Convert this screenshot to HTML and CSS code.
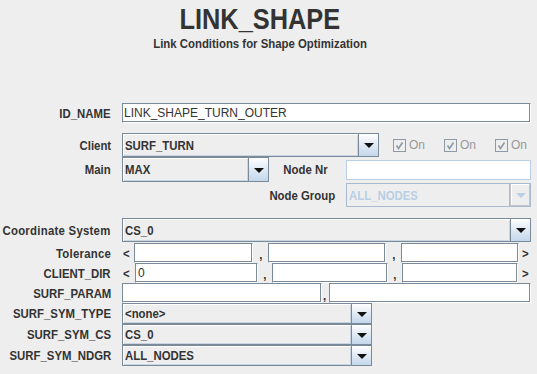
FILE: index.html
```html
<!DOCTYPE html>
<html>
<head>
<meta charset="utf-8">
<link rel="stylesheet" href="styles.css">
</head>
<body>
<div class="panel">
  <div class="header">
    <h1 class="title"><span>LINK_SHAPE</span></h1>
    <div class="subtitle"><span>Link Conditions for Shape Optimization</span></div>
  </div>

  <div class="form">
    <div class="row r-id">
      <div class="lbl"><span>ID_NAME</span></div>
      <div class="tf w-full"><span class="tf-text">LINK_SHAPE_TURN_OUTER</span></div>
    </div>

    <div class="row r-client">
      <div class="lbl"><span>Client</span></div>
      <div class="combo w-client"><div class="disp"><span>SURF_TURN</span></div><div class="btn"></div></div>
      <div class="checks">
        <div class="chk"><svg class="cbox" width="13" height="13" viewBox="0 0 13 13"><rect x="0.5" y="0.5" width="12" height="12" fill="#eeeeee" stroke="#8e9aa6"/><path d="M3.5 6.5 L5.5 9.5 L9.5 3.5" fill="none" stroke="#8e9aa6" stroke-width="1.6"/></svg><span>On</span></div>
        <div class="chk"><svg class="cbox" width="13" height="13" viewBox="0 0 13 13"><rect x="0.5" y="0.5" width="12" height="12" fill="#eeeeee" stroke="#8e9aa6"/><path d="M3.5 6.5 L5.5 9.5 L9.5 3.5" fill="none" stroke="#8e9aa6" stroke-width="1.6"/></svg><span>On</span></div>
        <div class="chk"><svg class="cbox" width="13" height="13" viewBox="0 0 13 13"><rect x="0.5" y="0.5" width="12" height="12" fill="#eeeeee" stroke="#8e9aa6"/><path d="M3.5 6.5 L5.5 9.5 L9.5 3.5" fill="none" stroke="#8e9aa6" stroke-width="1.6"/></svg><span>On</span></div>
      </div>
    </div>

    <div class="row r-main">
      <div class="lbl"><span>Main</span></div>
      <div class="combo w-main"><div class="disp"><span>MAX</span></div><div class="btn"></div></div>
      <div class="lbl2 nodenr"><span>Node Nr</span></div>
      <div class="tf tf-light w-node"></div>
    </div>

    <div class="row r-ng">
      <div class="lbl2 nodegroup"><span>Node Group</span></div>
      <div class="combo dis w-node"><div class="disp"><span>ALL_NODES</span></div><div class="btn"></div></div>
    </div>

    <div class="row r-cs">
      <div class="lbl lc"><span>Coordinate System</span></div>
      <div class="combo w-full"><div class="disp"><span>CS_0</span></div><div class="btn"></div></div>
    </div>

    <div class="row r-vec">
      <div class="lbl lc"><span>Tolerance</span></div>
      <div class="sep lt t1"><span>&lt;</span></div>
      <div class="tf tol-a"></div>
      <div class="sep comma t2"><span>,</span></div>
      <div class="tf tol-b"></div>
      <div class="sep comma t2"><span>,</span></div>
      <div class="tf tol-b"></div>
      <div class="sep gt t1"><span>&gt;</span></div>
    </div>

    <div class="row r-vec">
      <div class="lbl"><span>CLIENT_DIR</span></div>
      <div class="sep lt c1"><span>&lt;</span></div>
      <div class="tf cd-a"><span class="tf-text">0</span></div>
      <div class="sep comma c2"><span>,</span></div>
      <div class="tf cd-b"></div>
      <div class="sep comma c2"><span>,</span></div>
      <div class="tf cd-b"></div>
      <div class="sep gt c1"><span>&gt;</span></div>
    </div>

    <div class="row r-vec">
      <div class="lbl"><span>SURF_PARAM</span></div>
      <div class="tf sp-a"></div>
      <div class="sep comma-l"><span>,</span></div>
      <div class="tf sp-b"></div>
    </div>

    <div class="row r-sym">
      <div class="lbl"><span>SURF_SYM_TYPE</span></div>
      <div class="combo w-sym"><div class="disp"><span>&lt;none&gt;</span></div><div class="btn"></div></div>
    </div>
    <div class="row r-sym">
      <div class="lbl"><span>SURF_SYM_CS</span></div>
      <div class="combo w-sym"><div class="disp"><span>CS_0</span></div><div class="btn"></div></div>
    </div>
    <div class="row r-sym">
      <div class="lbl"><span>SURF_SYM_NDGR</span></div>
      <div class="combo w-sym"><div class="disp"><span>ALL_NODES</span></div><div class="btn"></div></div>
    </div>
  </div>
</div>
</body>
</html>
```

FILE: styles.css
```css
html, body {
  margin: 0;
  padding: 0;
  background: #eeeeee;
}
body {
  font-family: "Liberation Sans", Arial, sans-serif;
  color: #333333;
  width: 537px;
  height: 374px;
  overflow: hidden;
}
.panel {
  width: 537px;
}
.header {
  width: 520px;
  text-align: center;
}
.title {
  margin: 0;
  padding-top: 3px;
  font-size: 29px;
  line-height: 32px;
  font-weight: bold;
  color: #333333;
}
.title span,
.subtitle span {
  display: inline-block;
  transform: scaleX(0.875);
  transform-origin: center;
  white-space: nowrap;
}
.subtitle {
  margin-top: 1px;
  font-size: 13px;
  line-height: 15px;
  font-weight: bold;
}
.form {
  margin-top: 52px;
}
.row {
  display: flex;
  align-items: center;
}
.lbl,
.lbl2 {
  display: flex;
  justify-content: flex-end;
  font-size: 13px;
  font-weight: bold;
  white-space: nowrap;
  flex: none;
}
.lbl {
  width: 111px;
  margin-right: 11px;
}
.lbl.lc span {
  letter-spacing: 0.3px;
}
.lbl span,
.lbl2 span,
.sep span,
.disp span {
  display: inline-block;
  flex: none;
  transform: scaleX(0.875);
  transform-origin: right center;
  white-space: nowrap;
}
.disp span {
  transform-origin: left center;
}
.nodenr { width: 59px; margin-right: 18px; }
.nodegroup { width: 335px; margin-right: 11px; }

.r-id { height: 20px; margin-bottom: 10px; }
.r-client { height: 24px; }
.r-main { height: 25px; }
.r-ng { height: 24px; margin-top: 1px; }
.r-cs { height: 24px; margin-top: 11px; margin-bottom: 1px; }
.r-vec { height: 20px; }
.r-sym { height: 21px; }

/* text fields */
.tf {
  height: 20px;
  box-sizing: border-box;
  background: #ffffff;
  border: 1px solid;
  border-color: #7a8a99 #ffffff #ffffff #7a8a99;
  box-shadow: inset -1px -1px 0 #7a8a99;
  flex: none;
  display: flex;
  align-items: center;
  padding-left: 1px;
  font-size: 12px;
  color: #333333;
}
.r-vec .tf { padding-left: 2px; }
.tf-light {
  border: 1px solid #b8cfe5;
  box-shadow: none;
}
.tf-text { white-space: nowrap; }

/* combos */
.combo {
  height: 100%;
  box-sizing: border-box;
  border: 1px solid #7a8a99;
  display: flex;
  flex: none;
  background: #eeeeee;
}
.disp {
  flex: 1;
  display: flex;
  align-items: center;
  padding-left: 2px;
  box-shadow: inset 1px 1px 0 #ffffff, inset -1px -1px 0 #c9d6e2;
  font-size: 13px;
  font-weight: bold;
  color: #333333;
  overflow: hidden;
}
.btn {
  width: 19px;
  flex: none;
  border-left: 1px solid #7a8a99;
  background: linear-gradient(to bottom, #ffffff 0%, #e8eff7 35%, #c3d7eb 100%);
  display: flex;
  align-items: center;
  justify-content: center;
}
.btn::after {
  content: "";
  width: 0;
  height: 0;
  border-style: solid;
  border-width: 5px 5px 0 5px;
  border-color: #111111 transparent transparent transparent;
  margin-top: 1px;
}
.combo.dis {
  border-color: #a9bccf;
}
.combo.dis .disp {
  color: #b8cfe5;
  box-shadow: inset -1px 0 0 #a9bccf;
}
.combo.dis .btn {
  background: #eeeeee;
  border-left: 1px solid #c2c6cc;
  box-shadow: inset -1px -1px 0 #c2c6cc, inset 1px 1px 0 #ffffff;
}
.combo.dis .btn::after {
  border-color: #b8cfe5 transparent transparent transparent;
}

/* widths */
.w-full { width: 409px; }
.w-client { width: 257px; }
.w-main { width: 147px; }
.w-node { width: 185px; }
.w-sym { width: 250px; }
.tol-a { width: 119px; }
.tol-b { width: 118px; }
.cd-a { width: 123px; }
.cd-b { width: 116px; }
.sp-a { width: 200px; }
.sp-b { width: 202px; }

/* separators */
.sep {
  flex: none;
  font-size: 13px;
  font-weight: bold;
  height: 100%;
  display: flex;
  align-items: center;
}
.sep.lt { justify-content: flex-start; padding-left: 1px; box-sizing: border-box; }
.sep.gt { justify-content: flex-end; padding-right: 2px; box-sizing: border-box; }
.sep.comma { justify-content: center; align-items: flex-end; padding-bottom: 1px; box-sizing: border-box; }
.sep.comma-l { width: 7px; justify-content: flex-start; align-items: flex-end; padding-left: 1px; padding-bottom: 0; box-sizing: border-box; }
.t1 { width: 12px; }
.t2 { width: 15px; }
.c1 { width: 13px; }
.c2 { width: 14px; }
.sep.lt span, .sep.comma-l span { transform-origin: left center; }
.sep.comma span { transform-origin: center; }

/* checkboxes */
.checks {
  display: flex;
  margin-left: 14px;
  align-items: center;
}
.chk {
  width: 51px;
  display: flex;
  align-items: center;
  font-size: 12px;
  color: #999999;
}
.chk:last-child { width: auto; }
.cbox { flex: none; margin-right: 3px; }
```
